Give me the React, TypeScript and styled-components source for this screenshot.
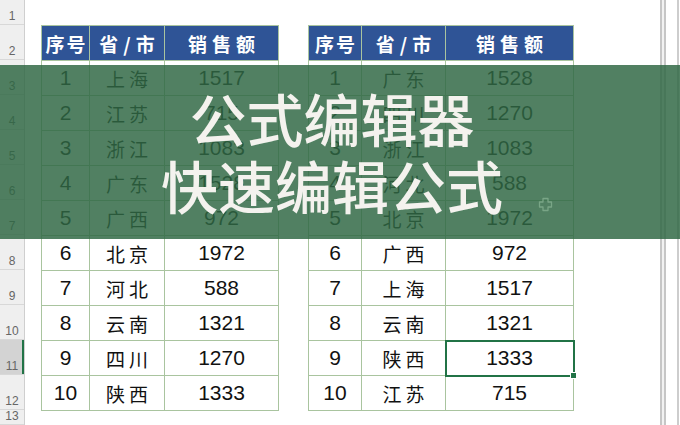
import React from "react";
import styled, { createGlobalStyle } from "styled-components";

type Row = [number, string, number];

const leftRows: Row[] = [
  [1, "上海", 1517],
  [2, "江苏", 715],
  [3, "浙江", 1083],
  [4, "广东", 1528],
  [5, "广西", 972],
  [6, "北京", 1972],
  [7, "河北", 588],
  [8, "云南", 1321],
  [9, "四川", 1270],
  [10, "陕西", 1333],
];

const rightRows: Row[] = [
  [1, "广东", 1528],
  [2, "四川", 1270],
  [3, "浙江", 1083],
  [4, "河北", 588],
  [5, "北京", 1972],
  [6, "广西", 972],
  [7, "上海", 1517],
  [8, "云南", 1321],
  [9, "陕西", 1333],
  [10, "江苏", 715],
];

const headers: [string, number][] = [
  ["序号", 2],
  ["省/市", 5],
  ["销售额", 5],
];

const rowHeights = [25, 35, 35, 35, 35, 35, 35, 35, 35, 35, 35, 35, 15];

const GlobalStyle = createGlobalStyle`
  html, body {
    margin: 0;
    padding: 0;
    background: #fff;
  }
  body {
    width: 680px;
    height: 425px;
    overflow: hidden;
    font-family: "Liberation Sans", "Noto Sans CJK SC", sans-serif;
  }
`;

const Window = styled.div`
  position: relative;
  width: 680px;
  height: 425px;
  overflow: hidden;
  display: flex;
  background: #fff;
`;

const RowHeaders = styled.div`
  flex: none;
  width: 24px;
  display: flex;
  flex-direction: column;
  background: #efefef;
  border-right: 1px solid #cfcfcf;
`;

const RowHead = styled.div<{ $h: number; $active?: boolean }>`
  flex: none;
  height: ${(p) => p.$h}px;
  box-sizing: border-box;
  border-bottom: 1px solid #d8d8d8;
  display: flex;
  align-items: flex-end;
  justify-content: center;
  padding-bottom: 1px;
  font-size: 12px;
  line-height: 13px;
  color: #666;
  background: ${(p) => (p.$active ? "#d3d3d3" : "transparent")};
  box-shadow: ${(p) => (p.$active ? "inset -2px 0 0 #217346" : "none")};
`;

const Sheet = styled.div`
  flex: none;
  width: 635px;
  display: flex;
  align-items: flex-start;
  gap: 29px;
  padding: 25px 0 0 16px;
  box-sizing: border-box;
`;

const Table = styled.table<{ $w: number }>`
  width: ${(p) => p.$w}px;
  border-collapse: collapse;
  table-layout: fixed;
`;

const HeadCell = styled.th<{ $sp: number }>`
  height: 34px;
  padding: 0;
  background: #2f5496;
  border: 1px solid #a9c49f;
  color: #fff;
  font-family: "Noto Sans CJK SC", serif;
  font-weight: 700;
  font-size: 19px;
  letter-spacing: ${(p) => p.$sp}px;
  text-indent: ${(p) => p.$sp}px;
  text-align: center;
  white-space: nowrap;
`;

const Cell = styled.td<{ $kind: "num" | "name"; $selected?: boolean }>`
  position: relative;
  height: 34px;
  padding: 0;
  border: 1px solid #a9c49f;
  color: #111;
  text-align: center;
  white-space: nowrap;
  font-family: ${(p) =>
    p.$kind === "name"
      ? `"Noto Sans CJK SC", sans-serif`
      : `"Liberation Sans", Arial, sans-serif`};
  font-size: ${(p) => (p.$kind === "name" ? "19px" : "21px")};
  letter-spacing: ${(p) => (p.$kind === "name" ? "4px" : "0")};
  text-indent: ${(p) => (p.$kind === "name" ? "4px" : "0")};
  outline: ${(p) => (p.$selected ? "2px solid #217346" : "none")};
  outline-offset: -1px;

  &::after {
    content: "";
    display: ${(p) => (p.$selected ? "block" : "none")};
    position: absolute;
    right: -4px;
    bottom: -4px;
    width: 5px;
    height: 5px;
    background: #217346;
    border: 1px solid #fff;
  }
`;

const Splitter = styled.div`
  flex: none;
  width: 2px;
  height: 100%;
  background: #f2f2f2;
  border-left: 2px solid #c6c6c6;
  border-right: 2px solid #c6c6c6;
`;

const RightPane = styled.div`
  flex: none;
  width: 11px;
  margin-right: 1px;
  height: 100%;
  border-right: 2px solid #cdcdcd;
`;

const Banner = styled.div`
  position: absolute;
  top: 65px;
  left: 0;
  width: 680px;
  height: 174px;
  box-sizing: border-box;
  padding: 19px 16px 0 0;
  background: rgba(48, 104, 68, 0.84);
  display: flex;
  flex-direction: column;
  align-items: center;
`;

const BannerLine = styled.div`
  font-family: "Noto Sans CJK SC", sans-serif;
  font-weight: 500;
  font-size: 57px;
  line-height: 67px;
  color: #f4f2ee;
  white-space: nowrap;
`;

const Cursor = styled.svg`
  position: absolute;
  left: 538px;
  top: 197px;
  width: 15px;
  height: 15px;
`;

function DataTable({ rows, widths, selected }: { rows: Row[]; widths: number[]; selected?: number }) {
  const total = widths.reduce((a, b) => a + b, 0);
  return (
    <Table $w={total}>
      <colgroup>
        {widths.map((w, i) => (
          <col key={i} style={{ width: w }} />
        ))}
      </colgroup>
      <thead>
        <tr>
          {headers.map(([label, sp]) => (
            <HeadCell key={label} $sp={sp}>
              {label}
            </HeadCell>
          ))}
        </tr>
      </thead>
      <tbody>
        {rows.map(([no, name, amount]) => (
          <tr key={no}>
            <Cell $kind="num">{no}</Cell>
            <Cell $kind="name">{name}</Cell>
            <Cell $kind="num" $selected={selected === no}>
              {amount}
            </Cell>
          </tr>
        ))}
      </tbody>
    </Table>
  );
}

export default function App() {
  return (
    <>
      <GlobalStyle />
      <Window>
        <RowHeaders>
          {rowHeights.map((h, i) => (
            <RowHead key={i} $h={h} $active={i === 10}>
              {i + 1}
            </RowHead>
          ))}
        </RowHeaders>
        <Sheet>
          <DataTable rows={leftRows} widths={[48, 75, 114]} />
          <DataTable rows={rightRows} widths={[53, 84, 128]} selected={9} />
        </Sheet>
        <Splitter />
        <RightPane />

        <Banner>
          <BannerLine>公式编辑器</BannerLine>
          <BannerLine>快速编辑公式</BannerLine>
        </Banner>

        <Cursor viewBox="0 0 15 15">
          <path
            d="M5 1.5h5v3.5h3.5v5H10v3.5H5V10H1.5V5H5z"
            fill="none"
            stroke="#79a586"
            strokeWidth="1.3"
            strokeLinejoin="round"
          />
        </Cursor>
      </Window>
    </>
  );
}
